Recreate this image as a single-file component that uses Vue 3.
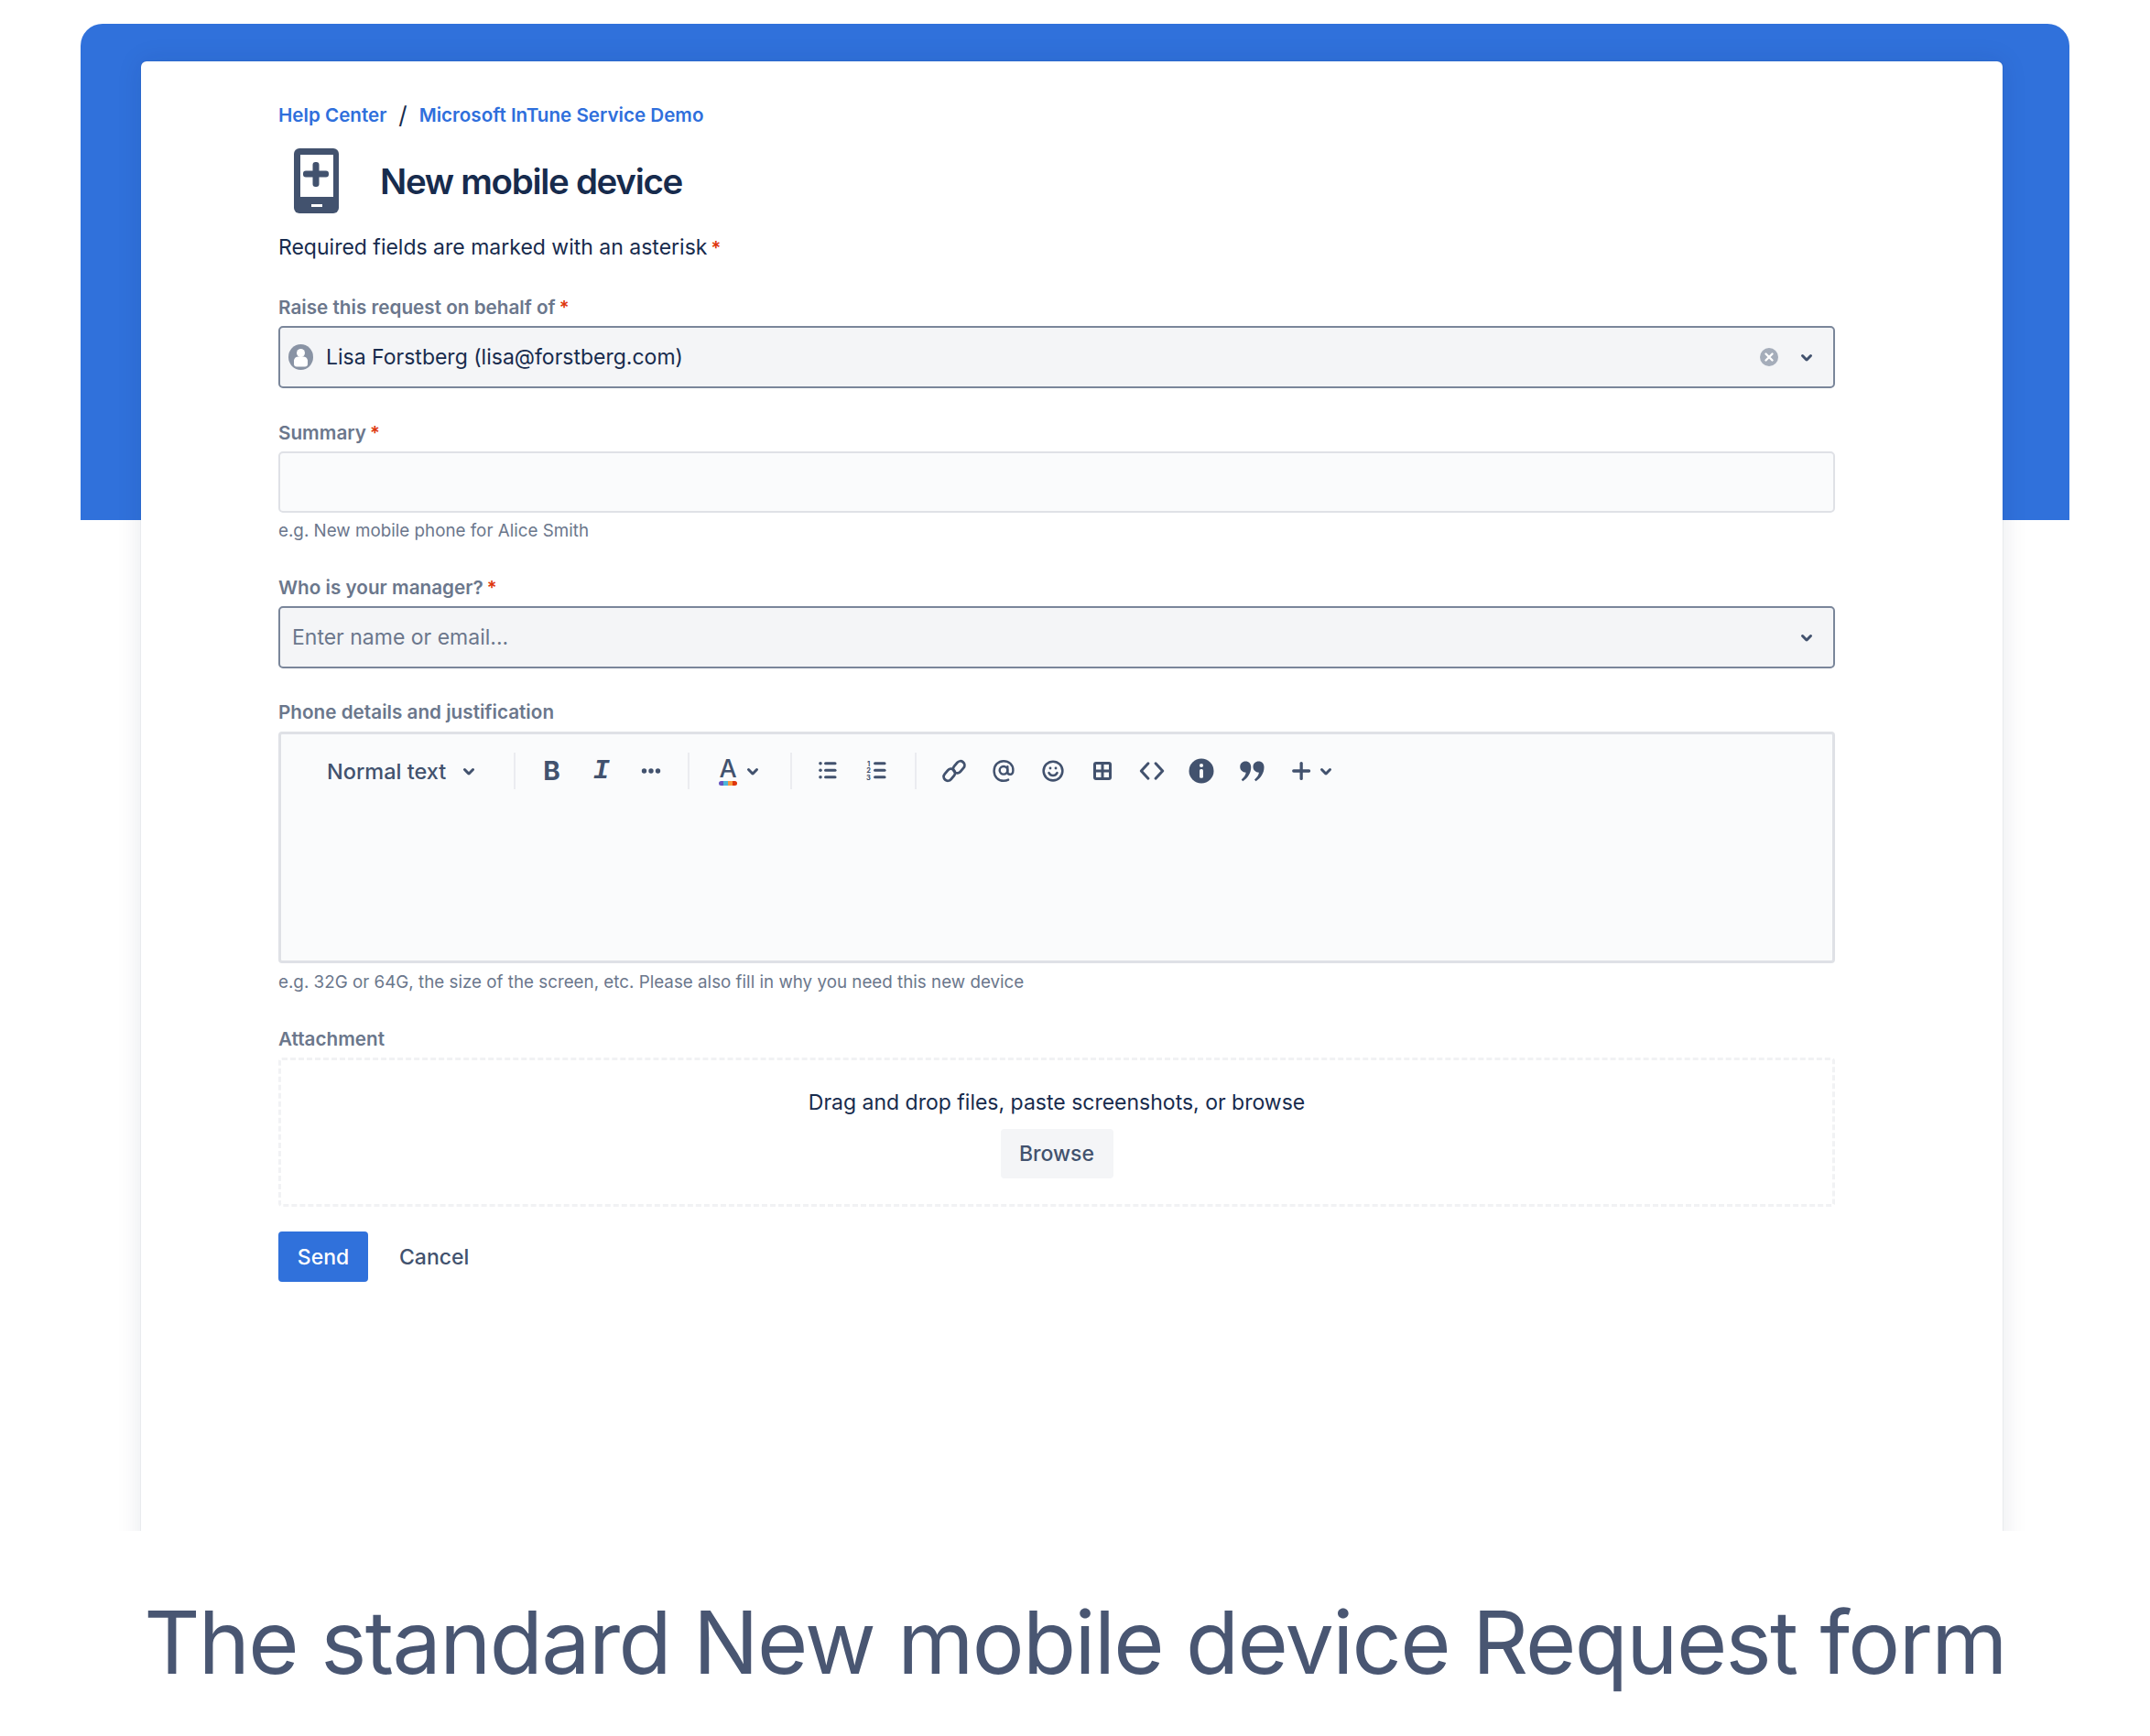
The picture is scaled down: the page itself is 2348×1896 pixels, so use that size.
<template>
  <div class="page">
    <div class="hero">
      <main class="card">
        <nav class="crumbs">
          <a class="crumbs__link">Help Center</a>
          <span class="crumbs__sep">/</span>
          <a class="crumbs__link">Microsoft InTune Service Demo</a>
        </nav>

        <header class="head">
          <svg class="head__icon" viewBox="0 0 49 71">
            <rect width="49" height="71" rx="6" fill="#42526e" />
            <rect x="7" y="7" width="36" height="46" fill="#fff" />
            <rect x="10" y="24.500" width="28" height="7" rx="3" fill="#42526e" />
            <rect x="20.500" y="15" width="7" height="27" rx="3" fill="#42526e" />
            <rect x="19" y="61" width="12" height="3" fill="#fff" />
          </svg>
          <h1 class="head__title">New mobile device</h1>
        </header>

        <p class="required">Required fields are marked with an asterisk<span class="star">*</span></p>

        <div class="field field--tall">
          <label class="field__label">Raise this request on behalf of<span class="star">*</span></label>
          <div class="select">
            <svg class="select__avatar" viewBox="0 0 27 28">
              <ellipse cx="13.500" cy="14" rx="13.500" ry="14" fill="#8993a4" />
              <circle cx="13.500" cy="9.500" r="4.500" fill="#fff" />
              <path d="M6 17.500a5 5 0 0 1 5-4h5a5 5 0 0 1 5 4v4a3 3 0 0 1-3 3H9a3 3 0 0 1-3-3z" fill="#fff" />
            </svg>
            <span class="select__value">Lisa Forstberg (lisa@forstberg.com)</span>
            <svg class="select__clear" viewBox="0 0 20 20">
              <circle cx="10" cy="10" r="10" fill="#a5adba" />
              <path d="M6.500 6.500l7 7M13.500 6.500l-7 7" stroke="#fff" stroke-width="2.400" stroke-linecap="round" />
            </svg>
            <svg class="chev select__chev" viewBox="0 0 24 24"><path :d="chevron" /></svg>
          </div>
        </div>

        <div class="field field--tall">
          <label class="field__label">Summary<span class="star">*</span></label>
          <div class="input"></div>
          <p class="field__hint field__hint--near">e.g. New mobile phone for Alice Smith</p>
        </div>

        <div class="field field--after-hint">
          <label class="field__label">Who is your manager?<span class="star">*</span></label>
          <div class="select select--empty">
            <span class="select__placeholder">Enter name or email...</span>
            <svg class="chev select__chev" viewBox="0 0 24 24"><path :d="chevron" /></svg>
          </div>
        </div>

        <div class="field">
          <label class="field__label">Phone details and justification</label>
          <div class="editor">
            <div class="toolbar">
              <div class="tool-style">
                <span>Normal text</span>
                <svg class="chev" viewBox="0 0 24 24"><path :d="chevron" /></svg>
              </div>
              <i class="sep"></i>
              <span class="tool tool--b">B</span>
              <span class="tool tool--i">I</span>
              <span class="tool">
                <svg class="ico" viewBox="0 0 24 24" fill="#42526e">
                  <circle cx="7" cy="12" r="1.800" /><circle cx="12" cy="12" r="1.800" /><circle cx="17" cy="12" r="1.800" />
                </svg>
              </span>
              <i class="sep"></i>
              <span class="tool tool--combo">
                <span class="color-a">
                  <span class="color-a__glyph">A</span>
                  <span class="color-a__bar"><b></b><b></b><b></b><b></b></span>
                </span>
                <svg class="chev chev--tight" viewBox="0 0 24 24"><path :d="chevron" /></svg>
              </span>
              <i class="sep"></i>
              <span class="tool">
                <svg class="ico" viewBox="0 0 24 24" fill="#42526e">
                  <circle cx="6" cy="6.500" r="1.200" /><circle cx="6" cy="11.500" r="1.200" /><circle cx="6" cy="16.500" r="1.200" />
                  <rect x="8.700" y="5.500" width="9" height="2" rx="1" /><rect x="8.700" y="10.500" width="9" height="2" rx="1" /><rect x="8.700" y="15.500" width="9" height="2" rx="1" />
                </svg>
              </span>
              <span class="tool">
                <svg class="ico" viewBox="0 0 24 24" fill="#42526e">
                  <text x="5" y="8.500" class="ico__num">1</text>
                  <text x="5" y="13.500" class="ico__num">2</text>
                  <text x="5" y="18.500" class="ico__num">3</text>
                  <rect x="8.700" y="5.500" width="9" height="2" rx="1" /><rect x="8.700" y="10.500" width="9" height="2" rx="1" /><rect x="8.700" y="15.500" width="9" height="2" rx="1" />
                </svg>
              </span>
              <i class="sep"></i>
              <span class="tool">
                <svg class="ico" viewBox="0 0 24 24" fill="none" stroke="#42526e" stroke-width="1.900">
                  <rect x="3.800" y="11.800" width="9.500" height="6" rx="3" transform="rotate(-50 8.550 14.800)" />
                  <rect x="10.700" y="6.200" width="9.500" height="6" rx="3" transform="rotate(-50 15.450 9.200)" />
                </svg>
              </span>
              <span class="tool">
                <svg class="ico" viewBox="0 0 24 24" fill="none" stroke="#42526e" stroke-width="1.800" stroke-linecap="round">
                  <g transform="translate(1.200 1.200) scale(.9)">
                    <circle cx="12" cy="11.500" r="3.200" />
                    <path d="M15.200 8.500v4.300c0 1.300 1 2 2 2 1.500 0 2.500-1.300 2.500-3.400C19.700 7 16.300 4 12 4S4.300 7.300 4.300 12s3.400 8 7.700 8c1.500 0 2.700-.3 3.800-.9" />
                  </g>
                </svg>
              </span>
              <span class="tool">
                <svg class="ico" viewBox="0 0 24 24" fill="none" stroke="#42526e" stroke-width="1.700" stroke-linecap="round">
                  <circle cx="12" cy="12" r="6.900" />
                  <path d="M9 13.400c.7 1.300 1.700 1.900 3 1.900s2.300-.6 3-1.900" />
                  <circle cx="10" cy="10" r=".95" fill="#42526e" stroke="none" />
                  <circle cx="14" cy="10" r=".95" fill="#42526e" stroke="none" />
                </svg>
              </span>
              <span class="tool">
                <svg class="ico" viewBox="0 0 24 24">
                  <rect x="5.330" y="5.330" width="13.340" height="13.340" rx="2" fill="#42526e" />
                  <rect x="7.330" y="7.330" width="3.670" height="3.670" fill="#fafbfc" />
                  <rect x="13" y="7.330" width="3.670" height="3.670" fill="#fafbfc" />
                  <rect x="7.330" y="13" width="3.670" height="3.670" fill="#fafbfc" />
                  <rect x="13" y="13" width="3.670" height="3.670" fill="#fafbfc" />
                </svg>
              </span>
              <span class="tool">
                <svg class="ico" viewBox="0 0 24 24" fill="none" stroke="#42526e" stroke-width="2" stroke-linecap="round" stroke-linejoin="round">
                  <path d="M9.300 6.500L4.200 12l5.100 5.500M14.700 6.500l5.100 5.500-5.100 5.500" />
                </svg>
              </span>
              <span class="tool">
                <svg class="ico" viewBox="0 0 24 24">
                  <circle cx="12" cy="12" r="9" fill="#42526e" />
                  <circle cx="12" cy="8" r="1.400" fill="#fafbfc" />
                  <rect x="10.700" y="10.700" width="2.600" height="6.400" rx="1" fill="#fafbfc" />
                </svg>
              </span>
              <span class="tool">
                <svg class="ico" viewBox="0 0 24 24" fill="#42526e">
                  <path d="M7.500 5c2.500 0 4 1.700 4 4.200 0 4.300-2.300 8-6 10.300l-1-1.200c1.900-1.700 3-3.300 3.300-5.100C5.300 13 3.500 11.300 3.500 9c0-2.300 1.700-4 4-4z" />
                  <path d="M17 5c2.500 0 4 1.700 4 4.200 0 4.300-2.300 8-6 10.300l-1-1.200c1.900-1.700 3-3.300 3.300-5.100C14.800 13 13 11.300 13 9c0-2.300 1.700-4 4-4z" />
                </svg>
              </span>
              <span class="tool tool--combo tool--plus">
                <svg class="ico" viewBox="0 0 24 24" fill="#42526e">
                  <rect x="11" y="5.300" width="2.200" height="13.400" rx="1.100" /><rect x="5.400" y="10.900" width="13.400" height="2.200" rx="1.100" />
                </svg>
                <svg class="chev chev--tight" viewBox="0 0 24 24"><path :d="chevron" /></svg>
              </span>
            </div>
          </div>
          <p class="field__hint">e.g. 32G or 64G, the size of the screen, etc. Please also fill in why you need this new device</p>
        </div>

        <div class="field field--after-hint">
          <label class="field__label">Attachment</label>
          <div class="drop">
            <p class="drop__text">Drag and drop files, paste screenshots, or browse</p>
            <button class="btn btn--browse">Browse</button>
          </div>
        </div>

        <div class="actions">
          <button class="btn btn--send">Send</button>
          <button class="btn btn--cancel">Cancel</button>
        </div>
      </main>
    </div>
    <h2 class="caption">The standard New mobile device Request form</h2>
  </div>
</template>

<script setup>
const chevron =
  "M8.292 10.293a1.009 1.009 0 000 1.419l2.939 2.965c.218.215.5.322.779.322s.556-.107.769-.322l2.93-2.955a1.01 1.01 0 000-1.419.987.987 0 00-1.406 0l-2.298 2.317-2.307-2.327a.99.99 0 00-1.406 0z";
</script>

<style scoped>
.page {
  width: 2348px;
  height: 1896px;
  padding-top: 26px;
  box-sizing: border-box;
  overflow: hidden;
  background: #fff;
  font-family: Inter, "Noto Sans", sans-serif;
  color: #172b4d;
}

.hero {
  margin: 0 88px;
  height: 1646px;
  padding: 41px 73px 0 66px;
  box-sizing: border-box;
  overflow: hidden;
  border-radius: 24px 24px 0 0;
  background: linear-gradient(#3071db, #3071db) top / 100% 542px no-repeat;
}

.card {
  height: 1700px;
  padding: 44px 183px 0 150px;
  box-sizing: border-box;
  border-radius: 6px;
  background: #fff;
  box-shadow: 0 0 1px rgba(9, 30, 66, 0.4), 0 0 28px rgba(9, 30, 66, 0.1);
}

.crumbs {
  display: flex;
  align-items: center;
  gap: 13px;
  height: 29px;
  font-size: 20.600px;
  font-weight: 600;
}
.crumbs__link { color: #2f6fdc; }
.crumbs__sep { font-size: 26px; font-weight: 400; color: #172b4d; }

.head {
  display: flex;
  align-items: center;
  margin-top: 22px;
  padding-left: 17px;
}
.head__icon { width: 49px; height: 71px; flex: none; }
.head__title {
  margin: 0 0 0 45px;
  font-size: 38.500px;
  font-weight: 600;
  letter-spacing: -1.300px;
  color: #172b4d;
}

.required {
  margin: 21px 0 0;
  font-size: 23px;
  line-height: 32px;
}

.star { margin-left: 4px; color: #de350b; font-weight: 600; font-size: 20px; }

.field { margin-top: 36px; }
.field--tall { margin-top: 37px; }
.field--after-hint { margin-top: 39px; }
.field__label {
  display: block;
  margin-bottom: 8px;
  font-size: 20.700px;
  line-height: 24px;
  font-weight: 600;
  color: #6b778c;
}
.field__hint {
  margin: 10px 0 0;
  font-size: 18.800px;
  line-height: 22px;
  color: #6b778c;
}
.field__hint--near { margin-top: 9px; }

.select {
  display: flex;
  align-items: center;
  height: 68px;
  padding: 0 11px 0 9px;
  box-sizing: border-box;
  border: 2px solid #7a869a;
  border-radius: 5px;
  background: #f4f5f7;
}
.select__avatar { width: 27px; height: 28px; flex: none; }
.select__value { margin-left: 14px; font-size: 23px; }
.select__placeholder { margin-left: 4px; font-size: 23px; color: #6b778c; }
.select__clear { width: 20px; height: 20px; margin-left: auto; }
.select__chev { margin-left: 13px; }
.select--empty .select__chev { margin-left: auto; }

.chev { width: 36px; height: 36px; flex: none; fill: #42526e; }
.chev--tight { margin-left: -9px; }

.input {
  height: 67px;
  box-sizing: border-box;
  border: 2px solid #dfe1e6;
  border-radius: 5px;
  background: #fafbfc;
}

.editor {
  height: 253px;
  margin-top: 9px;
  box-sizing: border-box;
  border: 3px solid #dfe1e6;
  border-radius: 4px;
  background: #fafbfc;
}
.toolbar {
  display: flex;
  align-items: center;
  height: 54px;
  margin-top: 13px;
  padding-left: 50px;
  color: #42526e;
}
.tool-style {
  display: flex;
  align-items: center;
  width: 190.500px;
  font-size: 23.500px;
  font-weight: 500;
}
.tool-style .chev { margin-left: 7px; }
.sep {
  flex: none;
  width: 2px;
  height: 40px;
  margin: 0 13px;
  background: #ebecf0;
}
.tool {
  display: flex;
  align-items: center;
  justify-content: center;
  flex: none;
  width: 54.200px;
  height: 54px;
}
.tool--b { font-size: 28px; font-weight: 700; }
.tool--i { font-family: "Liberation Mono", monospace; font-size: 30px; font-style: italic; font-weight: 700; }
.tool--combo { width: 84px; justify-content: flex-start; padding-left: 11px; box-sizing: border-box; }
.tool--plus { padding-left: 9px; }
.ico { width: 36px; height: 36px; }
.ico__num { font-family: Inter, sans-serif; font-size: 5px; font-weight: 700; text-anchor: middle; }

.color-a {
  display: flex;
  flex-direction: column;
  align-items: center;
  width: 36px;
}
.color-a__glyph { font-size: 27px; line-height: 26px; font-weight: 500; }
.color-a__bar { display: flex; height: 5px; border-radius: 3px; overflow: hidden; }
.color-a__bar b { width: 5px; height: 5px; }
.color-a__bar b:nth-child(1) { background: #6554c0; }
.color-a__bar b:nth-child(2) { background: #4cb5d8; }
.color-a__bar b:nth-child(3) { background: #f79a3e; }
.color-a__bar b:nth-child(4) { background: #de350b; }

.drop {
  display: flex;
  flex-direction: column;
  align-items: center;
  height: 163px;
  margin-top: 8px;
  padding-top: 31px;
  box-sizing: border-box;
  border: 3px dashed #f1f2f4;
  border-radius: 4px;
}
.drop__text { margin: 0; font-size: 23px; line-height: 30px; }

.btn {
  border: 0;
  border-radius: 4px;
  font-family: inherit;
  font-size: 23px;
  font-weight: 500;
  background: none;
}
.btn--browse {
  width: 123px;
  height: 54px;
  margin-top: 14px;
  background: #f4f5f7;
  color: #42526e;
}
.actions {
  display: flex;
  align-items: center;
  margin-top: 27px;
}
.btn--send {
  width: 98px;
  height: 55px;
  background: #3071db;
  color: #fff;
}
.btn--cancel {
  margin-left: 34px;
  padding: 0;
  color: #42526e;
}

.caption {
  margin: 65px 0 0;
  text-align: center;
  font-size: 95px;
  line-height: 114px;
  font-weight: 400;
  letter-spacing: -1.650px;
  color: #495672;
}
</style>
